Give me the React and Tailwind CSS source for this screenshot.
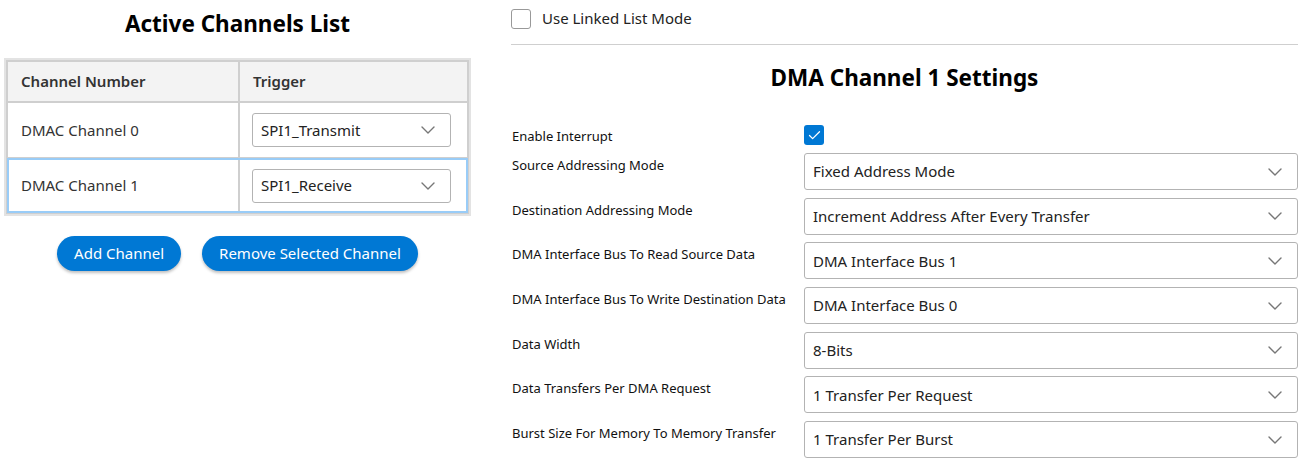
import { ChevronDown, Check } from "lucide-react";

const font = { fontFamily: '"Segoe UI", "Noto Sans", sans-serif' };

const Select = ({ value, className = "" }) => (
  <div
    className={`flex items-center justify-between border border-[#b3b3b3] rounded-[3px] bg-white pl-2 pr-[10px] text-[15px] text-[#222] ${className}`}
  >
    <span>{value}</span>
    <ChevronDown className="w-6 h-6 text-[#777]" strokeWidth={1.4} />
  </div>
);

const channels = [
  { name: "DMAC Channel 0", trigger: "SPI1_Transmit" },
  { name: "DMAC Channel 1", trigger: "SPI1_Receive", selected: true },
];

const settings = [
  { label: "Source Addressing Mode", value: "Fixed Address Mode" },
  { label: "Destination Addressing Mode", value: "Increment Address After Every Transfer" },
  { label: "DMA Interface Bus To Read Source Data", value: "DMA Interface Bus 1" },
  { label: "DMA Interface Bus To Write Destination Data", value: "DMA Interface Bus 0" },
  { label: "Data Width", value: "8-Bits" },
  { label: "Data Transfers Per DMA Request", value: "1 Transfer Per Request" },
  { label: "Burst Size For Memory To Memory Transfer", value: "1 Transfer Per Burst" },
];

const ActiveChannels = () => {
  return (
    <div className="w-[471px] pl-[4px] pt-[9px] shrink-0">
      <h2 className="text-center text-[22.5px] font-bold text-black leading-[30px]">
        Active Channels List
      </h2>
      <div className="mt-[19px] border-2 border-[#e3e3e3]">
        <table className="w-full border-collapse text-[15px] text-[#333]">
          <thead>
            <tr className="bg-[#f3f3f3] h-[41px]">
              <th className="w-[232px] text-left font-semibold pl-[13px] border-2 border-[#cfcfcf]">
                Channel Number
              </th>
              <th className="text-left font-semibold pl-[13px] border-2 border-[#cfcfcf]">Trigger</th>
            </tr>
          </thead>
          <tbody>
            {channels.map((c) => (
              <tr
                key={c.name}
                className={c.selected ? "h-[55px] outline-2 -outline-offset-2 outline-[#99ccf7]" : "h-[56px]"}
              >
                <td className="pl-[13px] border-2 border-[#cfcfcf]">{c.name}</td>
                <td className="pl-[12px] pr-[16px] border-2 border-[#cfcfcf]">
                  <Select value={c.trigger} className="h-[34px]" />
                </td>
              </tr>
            ))}
          </tbody>
        </table>
      </div>
      <div className="flex justify-center gap-[21px] mt-[20px]">
        <button className="h-[35px] px-[17px] rounded-full bg-[#0078d4] text-white text-[15px] shadow-[0_2px_3px_rgba(0,0,0,0.25)]">
          Add Channel
        </button>
        <button className="h-[35px] px-[17px] rounded-full bg-[#0078d4] text-white text-[15px] shadow-[0_2px_3px_rgba(0,0,0,0.25)]">
          Remove Selected Channel
        </button>
      </div>
    </div>
  );
};

const ChannelSettings = () => {
  return (
    <div className="flex-1 ml-[40px] mr-[7px]">
      <label className="flex items-center gap-[11px] h-[37px] text-[15px] text-[#222]">
        <span className="w-[20px] h-[20px] rounded-[3px] border border-[#999] bg-white" />
        Use Linked List Mode
      </label>
      <div className="border-t border-[#cfcfcf] mt-[7px]" />
      <h2 className="text-center text-[22.5px] font-bold text-black leading-[30px] mt-[18px]">
        DMA Channel 1 Settings
      </h2>
      <div className="mt-[28px] text-[13px] text-[#111]">
        <div className="flex items-center h-[28px] mb-[4px]">
          <div className="w-[293px] pl-[1px] pt-[3px]">Enable Interrupt</div>
          <span className="w-[20px] h-[20px] rounded-[3px] bg-[#0078d4] flex items-center justify-center">
            <Check className="w-[15px] h-[15px] text-white" strokeWidth={2} />
          </span>
        </div>
        <div className="flex flex-col gap-[7.7px]">
          {settings.map((s) => (
            <div key={s.label} className="flex items-start">
              <div className="w-[293px] pl-[1px] pt-[3px]">{s.label}</div>
              <Select value={s.value} className="flex-1 h-[37px]" />
            </div>
          ))}
        </div>
      </div>
    </div>
  );
};

export default function App() {
  return (
    <div className="flex w-[1305px] h-[465px] bg-white overflow-hidden" style={font}>
      <ActiveChannels />
      <ChannelSettings />
    </div>
  );
}
